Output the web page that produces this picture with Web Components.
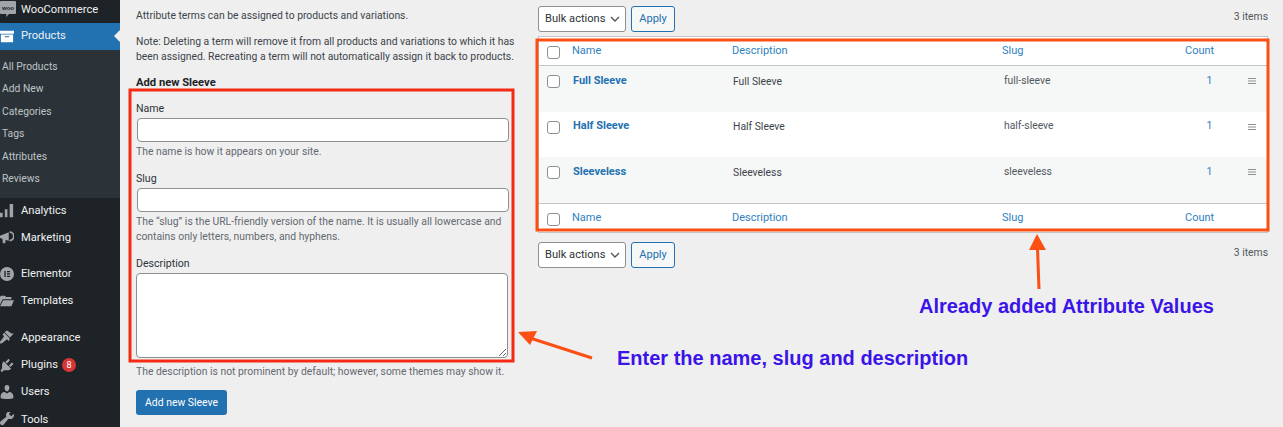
<!doctype html>
<html>
<head>
<meta charset="utf-8">
<style>
  html, body { margin: 0; height: 427px; overflow: hidden; background: #efefef; }
  body { font-family: Roboto, "Liberation Sans", sans-serif; }
</style>
</head>
<body>
<wp-screen>
  <wp-sidebar slot="side"></wp-sidebar>
  <term-form slot="left"></term-form>
  <term-panel slot="right"></term-panel>
</wp-screen>
<note-layer></note-layer>

<script>
const ICONS = {
  woo: '<path d="M1 0h14a1 1 0 0 1 1 1v11a1 1 0 0 1-1 1H9l-3 3 .5-3H1a1 1 0 0 1-1-1V1a1 1 0 0 1 1-1z"/><text x="8" y="9" text-anchor="middle" font-size="6" font-weight="700" fill="#1d2327">woo</text>',
  products: '<path fill-rule="evenodd" d="M0 2h16v3.4H0zM1 6.4h14V15H1zM5.5 8.2v1.2h5V8.2z"/>',
  analytics: '<path d="M0 10h3v5H0zM5.5 6h3v9h-3zM11 0h4v15h-4z"/>',
  marketing: '<path fill-rule="evenodd" d="M0 6.5 10 2.5v10l-3.5-1.3L6 15H3.2L2.800 10 0 9zM11 1.5a5.6 5.6 0 1 1 0 11.5V11a3.6 3.6 0 0 0 0-7.500z"/>',
  elementor: '<path fill-rule="evenodd" d="M8 0a8 8 0 1 1 0 16A8 8 0 0 1 8 0zM5 4.500v7h1.500v-7zM8 4.500V6h3.500V4.500zM8 7.200v1.500h3.500V7.200zM8 10v1.500h3.500V10z"/>',
  templates: '<path d="M0 3.500 1 2h4.500l1.500 1.500h6V6H3L0 12zM3.700 7H16l-3 7H0z"/>',
  appearance: '<path d="M14.480 11.060 7.410 3.990l1.500-1.500c.5-.56 2.300-.47 3.510.32 1.210.8 1.430 1.280 2.910 2.100 1.180.64 2.450 1.260 4.450.85zm-.71.71L6.700 4.700 4.930 6.470c-.39.39-.39 1.020 0 1.410l1.060 1.060c.39.39.39 1.030 0 1.420L1 17c-.5.800-.3 1.500.2 2s1.200.7 2 .2l6.640-5.020c.39-.39 1.030-.39 1.420 0l1.060 1.060c.39.39 1.020.39 1.410 0z"/>',
  plugins: '<path d="M13.110 4.360 9.870 7.600 8 5.730l3.240-3.240c.35-.34 1.050-.2 1.560.32.52.51.66 1.210.31 1.550zm-8 1.770.91-1.120 9.010 9.010-1.190.84c-.71.71-2.630 1.160-3.820 1.160H6.140L4.900 17.260c-.59.59-1.540.59-2.120 0-.59-.58-.59-1.530 0-2.120l1.240-1.240v-3.880c0-1.130.4-3.190 1.090-3.890zm7.260 3.970 3.240-3.240c.34-.35 1.040-.21 1.550.31.52.51.66 1.210.31 1.550l-3.240 3.250z"/>',
  users: '<path d="M10 9.250c-2.270 0-2.730-3.440-2.730-3.440C7 4.020 7.820 2 9.970 2c2.160 0 2.980 2.020 2.710 3.810 0 0-.41 3.440-2.680 3.440zm0 2.570L12.720 10c2.390 0 4.520 2.330 4.520 4.530v2.490s-3.650 1.130-7.240 1.130c-3.650 0-7.240-1.130-7.240-1.130v-2.490c0-2.250 1.940-4.480 4.470-4.480z"/>',
  tools: '<path d="M16.680 9.770c-1.340 1.340-3.300 1.670-4.950.99l-5.410 6.520c-.99.99-2.590.99-3.580 0s-.99-2.590 0-3.570l6.520-5.420c-.68-1.650-.35-3.610.99-4.950 1.280-1.280 3.120-1.620 4.720-1.060l-2.890 2.890 2.820 2.820 2.860-2.870c.53 1.580.18 3.390-1.080 4.650z"/>'
}
const VIEWBOX = { appearance: '1 1 19 19', plugins: '2 1 16 17', users: '2 2 16 16', tools: '2 3 16 16' }

class WpScreen extends HTMLElement {
  constructor () {
    super()
    this.shadow = this.attachShadow({ mode: 'open' })
  }

  connectedCallback () {
    this.shadow.innerHTML = /* html */`
    <style>
      :host { display: flex; height: 427px; overflow: hidden; color: #3c434a; }
      .side { flex: 0 0 120px; display: flex; }
      .content { flex: 1; min-width: 0; display: flex; padding: 0 15px 0 16px; gap: 21px; }
      .left { flex: 0 0 381px; display: block; }
      .right { flex: 1; min-width: 0; }
    </style>
    <div class="side"><slot name="side"></slot></div>
    <div class="content">
      <div class="left"><slot name="left"></slot></div>
      <div class="right"><slot name="right"></slot></div>
    </div>`
  }
}

class WpMenuItem extends HTMLElement {
  constructor () {
    super()
    this.shadow = this.attachShadow({ mode: 'open' })
  }

  connectedCallback () {
    const icon = this.getAttribute('icon')
    const active = this.hasAttribute('active')
    const badge = this.getAttribute('badge')
    this.shadow.innerHTML = /* html */`
    <style>
      :host { display: block; }
      .row {
        display: flex; align-items: center; gap: var(--icon-gap, 7px); box-sizing: border-box;
        height: var(--row-height, 27.300px); padding-bottom: var(--row-pad, 0);
        color: #f0f0f1; font-size: 11.200px; position: relative;
        background: ${active ? '#2271b1' : 'transparent'};
      }
      svg { width: var(--icon-size, 14px); height: var(--icon-size, 14px); flex: none; fill: ${active ? '#fff' : '#a0a5aa'}; font-family: "Liberation Sans", sans-serif; }
      .arrow {
        position: absolute; right: 0; top: 7px; width: 0; height: 0;
        border: 6px solid transparent; border-right-color: #efefef; border-left-width: 0;
      }
      .badge {
        width: 14px; height: 14px; border-radius: 50%; background: #d63638; color: #fff;
        font-size: 9px; display: flex; align-items: center; justify-content: center; margin-left: -3px;
      }
    </style>
    <div class="row">
      <svg viewBox="${VIEWBOX[icon] || '0 0 16 16'}">${ICONS[icon]}</svg>
      <slot></slot>
      ${badge ? `<span class="badge">${badge}</span>` : ''}
      ${active ? '<span class="arrow"></span>' : ''}
    </div>`
  }
}

class WpSidebar extends HTMLElement {
  constructor () {
    super()
    this.shadow = this.attachShadow({ mode: 'open' })
  }

  connectedCallback () {
    const subs = ['All Products', 'Add New', 'Categories', 'Tags', 'Attributes', 'Reviews']
    this.shadow.innerHTML = /* html */`
    <style>
      :host { display: block; width: 120px; background: #1d2327; font-family: Roboto, "Liberation Sans", sans-serif; }
      .first { --row-height: 18px; --icon-size: 16px; --icon-gap: 5px; height: 23px; overflow: hidden; }
      .active { --row-height: 27px; --row-pad: 2px; }
      .sub { background: #2c3338; height: 148px; padding-top: 5.500px; box-sizing: border-box; }
      .sub div { height: 22.600px; line-height: 22.600px; padding-left: 2px; color: #bfc3c7; font-size: 10.300px; }
      .gap { height: 9px; }
      .short { --row-height: 25.700px; }
    </style>
    <div class="first"><wp-menu-item icon="woo">WooCommerce</wp-menu-item></div>
    <wp-menu-item class="active" icon="products" active>Products</wp-menu-item>
    <div class="sub">${subs.map(s => `<div>${s}</div>`).join('')}</div>
    <wp-menu-item class="short" icon="analytics">Analytics</wp-menu-item>
    <wp-menu-item icon="marketing">Marketing</wp-menu-item>
    <div class="gap"></div>
    <wp-menu-item icon="elementor">Elementor</wp-menu-item>
    <wp-menu-item icon="templates">Templates</wp-menu-item>
    <div class="gap"></div>
    <wp-menu-item icon="appearance">Appearance</wp-menu-item>
    <wp-menu-item icon="plugins" badge="8">Plugins</wp-menu-item>
    <wp-menu-item icon="users">Users</wp-menu-item>
    <wp-menu-item icon="tools">Tools</wp-menu-item>`
  }
}

class FormField extends HTMLElement {
  constructor () {
    super()
    this.shadow = this.attachShadow({ mode: 'open' })
  }

  connectedCallback () {
    const big = this.hasAttribute('big')
    this.shadow.innerHTML = /* html */`
    <style>
      :host { display: block; }
      label { display: block; height: 15px; line-height: 15px; font-size: 10.600px; color: #2c3338; margin-bottom: 2px; }
      .box {
        box-sizing: border-box; display: block; background: #fff;
        border: 1px solid #8c8f94; border-radius: 4px; padding: 0; outline: none;
        width: 372px; height: ${big ? '85px' : '24px'};
        margin-left: ${big ? '0' : '1px'};
      }
      textarea.box { resize: both; }
      .hint { font-size: 10.370px; line-height: 15px; color: #646970; margin-top: ${big ? '6px' : '2px'}; width: 372px; }
    </style>
    <label>${this.getAttribute('label')}</label>
    ${big ? '<textarea class="box"></textarea>' : '<input class="box">'}
    <div class="hint"><slot></slot></div>`
  }
}

class TermForm extends HTMLElement {
  constructor () {
    super()
    this.shadow = this.attachShadow({ mode: 'open' })
  }

  connectedCallback () {
    this.shadow.innerHTML = /* html */`
    <style>
      :host { display: block; font-size: 10.370px; color: #3c434a; }
      p { margin: 0; line-height: 15px; }
      .lead { padding-top: 8px; }
      .note { margin-top: 11px; }
      h2 { margin: 11px 0 0; font-size: 11.200px; line-height: 15px; font-weight: 700; color: #1d2327; }
      .f1 { margin-top: 11px; }
      .f2, .f3 { margin-top: 12px; }
      button {
        display: block; margin-top: 11px; width: 91px; height: 25px; padding: 0;
        background: #2271b1; color: #fff; border: 0; border-radius: 3px;
        font: 10.400px Roboto, "Liberation Sans", sans-serif;
      }
    </style>
    <p class="lead">Attribute terms can be assigned to products and variations.</p>
    <p class="note">Note: Deleting a term will remove it from all products and variations to which it has been assigned. Recreating a term will not automatically assign it back to products.</p>
    <h2>Add new Sleeve</h2>
    <form-field class="f1" label="Name">The name is how it appears on your site.</form-field>
    <form-field class="f2" label="Slug">The “slug” is the URL-friendly version of the name. It is usually all lowercase and contains only letters, numbers, and hyphens.</form-field>
    <form-field class="f3" label="Description" big>The description is not prominent by default; however, some themes may show it.</form-field>
    <button>Add new Sleeve</button>`
  }
}

class BulkBar extends HTMLElement {
  constructor () {
    super()
    this.shadow = this.attachShadow({ mode: 'open' })
  }

  connectedCallback () {
    this.shadow.innerHTML = /* html */`
    <style>
      :host { display: flex; align-items: center; height: 26px; gap: 5px; font-size: 11.100px; }
      .select {
        box-sizing: border-box; width: 88px; height: 26px; display: flex; align-items: center; justify-content: space-between;
        padding: 0 5px 1px 6px; background: #fff; border: 1px solid #8c8f94; border-radius: 3px; color: #2c3338;
      }
      svg { width: 10px; height: 6px; fill: none; stroke: #50575e; stroke-width: 1.400; }
      .apply {
        box-sizing: border-box; width: 44px; height: 26px; display: flex; align-items: center; justify-content: center;
        padding-bottom: 1px; background: #f6f7f7; border: 1px solid #2271b1; border-radius: 3px; color: #2271b1;
      }
      .count { margin: 0 0 6px auto; color: #50575e; font-size: 10.370px; }
    </style>
    <div class="select">Bulk actions<svg viewBox="0 0 10 6"><path d="M1 1l4 4 4-4"/></svg></div>
    <div class="apply">Apply</div>
    <div class="count">3 items</div>`
  }
}

class TermRow extends HTMLElement {
  constructor () {
    super()
    this.shadow = this.attachShadow({ mode: 'open' })
  }

  connectedCallback () {
    const head = this.hasAttribute('head')
    const name = this.getAttribute('name')
    const desc = this.getAttribute('desc')
    const slug = this.getAttribute('slug')
    const cells = head ? /* html */`
      <span class="th">Name</span><span class="th">Description</span><span class="th">Slug</span><span class="th">Count</span><span></span>`
      : /* html */`
      <a>${name}</a><span class="desc">${desc}</span><span class="slug">${slug}</span><span class="num">1</span>
      <svg viewBox="0 0 8 6"><path d="M0 .5h8M0 3h8M0 5.500h8"/></svg>`
    this.shadow.innerHTML = /* html */`
    <style>
      :host { display: block; }
      .row {
        display: grid; grid-template-columns: 25px 160px 270px 183px 61px 1fr;
        height: 100%; padding-left: 8px; box-sizing: border-box; font-size: 10.370px; color: #3c434a;
        align-items: start;
      }
      i {
        display: block; width: 13px; height: 13px; box-sizing: border-box; margin-top: 9px;
        background: #fff; border: 1px solid #8c8f94; border-radius: 3px;
      }
      span, a { display: block; line-height: 14px; }
      .th { color: #2f7fc1; font-size: 11px; padding-top: 7px; }
      a { color: #2271b1; font-weight: 700; font-size: 11px; padding: 7.500px 0 0 1px; }
      .desc { padding: 8.800px 0 0 1px; }
      .slug { padding: 7.500px 0 0 2px; color: #50575e; }
      .num { padding: 7.500px 0 0 21.500px; color: #2f7fc1; }
      svg { width: 8px; height: 6px; margin: 12px 0 0 2px; fill: none; stroke: #8c8f94; stroke-width: 1; }
    </style>
    <div class="row"><i></i>${cells}</div>`
  }
}

class TermTable extends HTMLElement {
  constructor () {
    super()
    this.shadow = this.attachShadow({ mode: 'open' })
  }

  connectedCallback () {
    this.shadow.innerHTML = /* html */`
    <style>
      :host { display: block; height: 197px; box-sizing: border-box; border: 1px solid #c3c4c7; background: #fff; }
      .head { height: 28px; border-bottom: 1px solid #c3c4c7; }
      .odd { height: 45.600px; background: #f6f7f7; }
      .even { height: 45.600px; background: #fff; }
      .foot { height: 28.200px; border-top: 1px solid #c3c4c7; }
    </style>
    <term-row class="head" head></term-row>
    <term-row class="odd" name="Full Sleeve" desc="Full Sleeve" slug="full-sleeve"></term-row>
    <term-row class="even" name="Half Sleeve" desc="Half Sleeve" slug="half-sleeve"></term-row>
    <term-row class="odd" name="Sleeveless" desc="Sleeveless" slug="sleeveless"></term-row>
    <term-row class="foot" head></term-row>`
  }
}

class TermPanel extends HTMLElement {
  constructor () {
    super()
    this.shadow = this.attachShadow({ mode: 'open' })
  }

  connectedCallback () {
    this.shadow.innerHTML = /* html */`
    <style>
      :host { display: block; padding-top: 6px; }
      term-table { margin: 4px 0 9px; }
    </style>
    <bulk-bar></bulk-bar>
    <term-table></term-table>
    <bulk-bar></bulk-bar>`
  }
}

// red boxes, arrows and captions painted over the screenshot
class NoteLayer extends HTMLElement {
  constructor () {
    super()
    this.shadow = this.attachShadow({ mode: 'open' })
  }

  connectedCallback () {
    this.shadow.innerHTML = /* html */`
    <style>
      :host { position: absolute; left: 0; top: 0; width: 1283px; height: 427px; pointer-events: none; }
      svg { position: absolute; left: 0; top: 0; }
      .cap {
        position: absolute; white-space: nowrap; color: #3b14e8;
        font: 700 20px/24px "Liberation Sans", Arial, sans-serif;
      }
    </style>
    <svg width="1283" height="427" fill="none">
      <rect x="130" y="90" width="383" height="271" stroke="#f52a12" stroke-width="3"/>
      <rect x="537" y="40" width="731" height="190" stroke="#fb4f14" stroke-width="3"/>
      <path d="M592 358 530 338" stroke="#fb4f14" stroke-width="3"/>
      <path d="M518 332 537 331 530 345z" fill="#fb4f14"/>
      <path d="M1039 289 1037.500 248" stroke="#fb4f14" stroke-width="3"/>
      <path d="M1037 234 1046 250 1029 250z" fill="#fb4f14"/>
    </svg>
    <div class="cap" style="left:617px;top:346px">Enter the name, slug and description</div>
    <div class="cap" style="left:919px;top:294px">Already added Attribute Values</div>`
  }
}

customElements.define('wp-screen', WpScreen)
customElements.define('wp-menu-item', WpMenuItem)
customElements.define('wp-sidebar', WpSidebar)
customElements.define('form-field', FormField)
customElements.define('term-form', TermForm)
customElements.define('bulk-bar', BulkBar)
customElements.define('term-row', TermRow)
customElements.define('term-table', TermTable)
customElements.define('term-panel', TermPanel)
customElements.define('note-layer', NoteLayer)
</script>
</body>
</html>
